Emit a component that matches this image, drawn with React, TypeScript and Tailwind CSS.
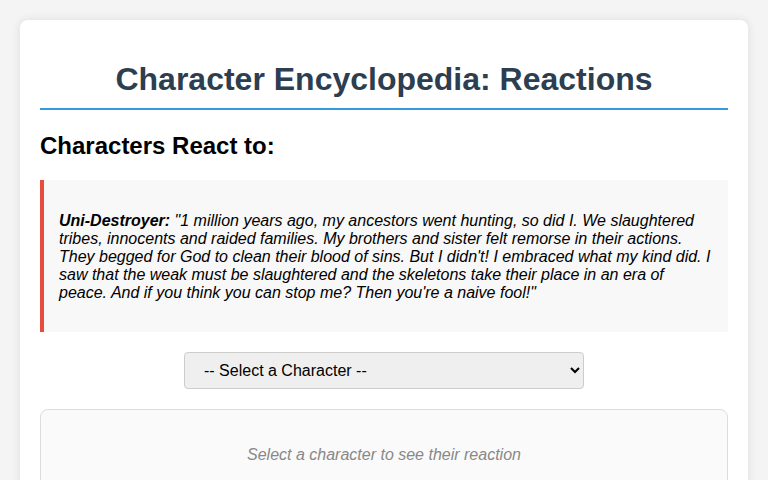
import React from "react";

export default function App() {
  return (
    <div
      className="min-h-screen bg-[#f4f4f4] p-[20px] text-[#333]"
      style={{ fontFamily: '"Liberation Sans", Arial, sans-serif' }}
    >
      <div className="rounded-[8px] bg-white p-[20px] shadow-[0_0_10px_rgba(0,0,0,0.1)]">
        <h1 className="mt-[21px] border-b-2 border-[#3498db] pb-[10px] text-center text-[32px] font-bold leading-[37px] text-[#2c3e50]">
          Character Encyclopedia: Reactions
        </h1>
        <h2 className="mt-[22px] mb-[20px] text-[24px] font-bold leading-[28px] text-black">
          Characters React to:
        </h2>
        <blockquote className="border-l-4 border-[#e74c3c] bg-[#f8f8f8] px-[15px] pt-[16px] pb-[14px]">
          <p className="my-[16px] text-[16px] italic leading-[18px] text-black">
            <strong>Uni-Destroyer:</strong> "1 million years ago, my ancestors went hunting, so did I. We
            slaughtered tribes, innocents and raided families. My brothers and sister felt remorse in their
            actions. They begged for God to clean their blood of sins. But I didn't! I embraced what my kind
            did. I saw that the weak must be slaughtered and the skeletons take their place in an era of
            peace. And if you think you can stop me? Then you're a naive fool!"
          </p>
        </blockquote>
        <div className="mt-[20px] flex justify-center">
          <select
            className="h-[37px] w-[400px] rounded-[4px] border border-[#ccc] bg-[#efefef] px-[15px] text-[16px] text-black"
            style={{ fontFamily: '"Liberation Sans", Arial, sans-serif' }}
            defaultValue=""
          >
            <option value="">-- Select a Character --</option>
            <option value="uni">Uni-Destroyer</option>
          </select>
        </div>
        <div className="mt-[20px] rounded-[8px] border border-[#ddd] bg-[#fafafa] p-[20px]">
          <p className="my-[16px] text-center text-[16px] italic leading-[18px] text-[#888]">
            Select a character to see their reaction
          </p>
        </div>
      </div>
    </div>
  );
}
